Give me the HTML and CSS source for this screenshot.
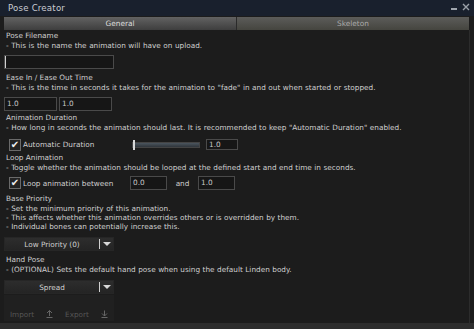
FILE: index.html
```html
<!DOCTYPE html>
<html lang="en">
<head>
  <meta charset="UTF-8">
  <title>Pose Creator</title>
  <link rel="stylesheet" href="styles.css">
</head>
<body>
  <div class="floater">
    <div class="titlebar">
      <span class="title">Pose Creator</span>
      <div class="title-btns">
        <span class="btn-min"></span>
        <svg class="btn-close" width="8" height="8" viewBox="0 0 8 8"><path d="M1 1L7 7M7 1L1 7" stroke="#9aa0a8" stroke-width="1.4"/></svg>
      </div>
    </div>

    <div class="tabs">
      <div class="tab active">General</div>
      <div class="tab">Skeleton</div>
    </div>

    <div class="panel">
      <div class="label first">Pose Filename</div>
      <div class="desc">- This is the name the animation will have on upload.</div>
      <div class="row gap5">
        <div class="input wide caret"></div>
      </div>

      <div class="label">Ease In / Ease Out Time</div>
      <div class="desc">- This is the time in seconds it takes for the animation to "fade" in and out when started or stopped.</div>
      <div class="row gap5">
        <div class="input half">1.0</div>
        <div class="input half">1.0</div>
      </div>

      <div class="label tight">Animation Duration</div>
      <div class="desc">- How long in seconds the animation should last. It is recommended to keep "Automatic Duration" enabled.</div>
      <div class="grid-row auto-row">
        <label class="check"><span class="box">&#10004;</span>Automatic Duration</label>
        <div class="slider"><span class="knob"></span></div>
        <div class="input small">1.0</div>
      </div>

      <div class="label tight">Loop Animation</div>
      <div class="desc">- Toggle whether the animation should be looped at the defined start and end time in seconds.</div>
      <div class="grid-row loop-row">
        <label class="check"><span class="box">&#10004;</span>Loop animation between</label>
        <div class="input">0.0</div>
        <span class="and">and</span>
        <div class="input">1.0</div>
      </div>

      <div class="label">Base Priority</div>
      <div class="desc">- Set the minimum priority of this animation.</div>
      <div class="desc">- This affects whether this animation overrides others or is overridden by them.</div>
      <div class="desc">- Individual bones can potentially increase this.</div>
      <div class="row gap6">
        <div class="combo"><span class="combo-text">Low Priority (0)</span><span class="combo-arrow"></span></div>
      </div>

      <div class="label">Hand Pose</div>
      <div class="desc">- (OPTIONAL) Sets the default hand pose when using the default Linden body.</div>
      <div class="row gap6">
        <div class="combo"><span class="combo-text">Spread</span><span class="combo-arrow"></span></div>
      </div>

      <div class="footer">
        <span class="foot-btn">Import
          <svg width="7" height="8" viewBox="0 0 7 8"><path d="M3.5 0.5V6M1 3L3.5 0.5L6 3M0.5 7.5H6.5" stroke="#666" fill="none"/></svg>
        </span>
        <span class="foot-btn">Export
          <svg width="7" height="8" viewBox="0 0 7 8"><path d="M3.5 0.5V6M1 3.5L3.5 6L6 3.5M0.5 7.5H6.5" stroke="#666" fill="none"/></svg>
        </span>
      </div>
    </div>
    <div class="bottom-strip"></div>
  </div>
</body>
</html>
```

FILE: styles.css
```css
body {
  margin: 0;
  background-color: #141414;
  font-family: "DejaVu Sans", sans-serif;
  font-size: 7.3px;
  color: #cfcfcf;
  width: 474px;
  height: 329px;
  overflow: hidden;
}

.floater {
  width: 474px;
  height: 329px;
  background: #1c1c1c;
  display: flex;
  flex-direction: column;
}

.titlebar {
  height: 16px;
  background: #19202d;
  display: flex;
  align-items: center;
  justify-content: space-between;
  padding: 0 4px 0 8px;
}

.title {
  font-size: 8.6px;
  color: #c9ccd2;
  letter-spacing: 0.2px;
}

.title-btns {
  display: flex;
  align-items: center;
  gap: 5px;
  margin-top: -2px;
}

.btn-min {
  width: 6px;
  height: 2px;
  background: #a0a6ae;
  margin-top: 3px;
}

.tabs {
  display: flex;
  margin: 1px 5px 0 4px;
  height: 13px;
}

.tab {
  flex: 1;
  display: flex;
  align-items: center;
  justify-content: center;
  background: linear-gradient(#5c5c5a, #45453f);
  color: #aaaaaa;
  border-left: 1px solid #2a2a2a;
  font-size: 7.4px;
}

.tab.active {
  color: #dcdcdc;
  background: linear-gradient(#626262, #3e3e3e);
  border-left: none;
}

.panel {
  flex: 1;
  margin-right: 4px;
  padding: 0 0 0 6px;
  border-right: 1px solid #2c2c2c;
  display: flex;
  flex-direction: column;
}

.label {
  line-height: 10px;
  margin-top: 4px;
  white-space: nowrap;
}

.label.first {
  margin-top: 1px;
}

.label.tight {
  margin-top: 2px;
}

.desc {
  line-height: 9px;
  white-space: nowrap;
  word-spacing: 0.2px;
}

.row {
  display: flex;
  align-items: center;
  margin-left: -2px;
}

.gap5 {
  margin-top: 5px;
}

.gap6 {
  margin-top: 6px;
}

.input {
  box-sizing: border-box;
  height: 14px;
  border: 1px solid #4a4a4a;
  background: #161616;
  line-height: 12px;
  padding-left: 2px;
  color: #c8c8c8;
}

.input.wide {
  width: 110px;
}

.input.caret {
  box-shadow: inset 1px 0 0 #d0d0d0;
}

.input.half {
  width: 53px;
  margin-right: 2px;
}

.grid-row {
  display: grid;
  align-items: center;
  margin-left: 3px;
}

.auto-row {
  grid-template-columns: 123px 68px 6px 32px;
  height: 13px;
  margin-top: 6px;
}

.auto-row .input {
  grid-column: 4;
  height: 11px;
  line-height: 9px;
}

.loop-row {
  grid-template-columns: 121px 37px 31px 37px;
  height: 14px;
  margin-top: 4px;
}

.check {
  display: flex;
  align-items: center;
  white-space: nowrap;
  overflow: hidden;
}

.box {
  flex: none;
  width: 10px;
  height: 10px;
  border: 1px solid #6a6a6a;
  background: #232323;
  color: #f0f0f0;
  font-size: 10px;
  line-height: 10px;
  text-align: center;
  margin-right: 2px;
}

.slider {
  height: 6px;
  box-sizing: border-box;
  background: linear-gradient(#4b555e, #2f353b);
  border: 1px solid #444;
  position: relative;
}

.knob {
  position: absolute;
  left: 0;
  top: -3px;
  width: 2px;
  height: 10px;
  background: #d8d8d8;
}

.and {
  text-align: center;
}

.combo {
  width: 110px;
  height: 14px;
  background: linear-gradient(#2d2d2d, #242424);
  border: 1px solid #262626;
  display: flex;
  align-items: center;
  box-sizing: border-box;
}

.combo-text {
  flex: 1;
  text-align: center;
  color: #cfcfcf;
}

.combo-arrow {
  width: 13px;
  height: 10px;
  border-left: 1px solid #cfcfcf;
  position: relative;
}

.combo-arrow::after {
  content: "";
  position: absolute;
  left: 3px;
  top: 3px;
  border-left: 4px solid transparent;
  border-right: 4px solid transparent;
  border-top: 4px solid #d8d8d8;
}

.footer {
  margin: auto 0 2px -2px;
  width: 110px;
  height: 26px;
  background: #202020;
  display: flex;
  align-items: flex-end;
  padding-bottom: 2px;
  box-sizing: border-box;
}

.foot-btn {
  flex: 1;
  display: flex;
  align-items: center;
  justify-content: center;
  gap: 12px;
  color: #555;
  height: 10px;
}

.bottom-strip {
  height: 6px;
  background: #2d2d2d;
}
```
